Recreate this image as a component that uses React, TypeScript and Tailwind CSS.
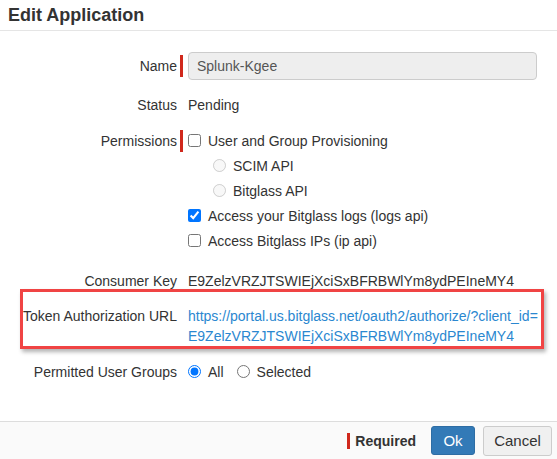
import React from "react";

const font = { fontFamily: '"Liberation Sans", Arial, sans-serif' };

function Row({
  label,
  required,
  children,
  className = "",
}: {
  label: string;
  required?: boolean;
  children: React.ReactNode;
  className?: string;
}) {
  return (
    <div className={`flex items-center ${className}`}>
      <div className="w-[177px] shrink-0 text-right">{label}</div>
      <div className="flex w-[11px] shrink-0 self-stretch items-center">
        {required && <span className="ml-[3px] h-[22px] w-[3px] bg-[#d0281c]" />}
      </div>
      <div className="flex min-w-0 flex-1 items-center">{children}</div>
    </div>
  );
}

function Check({ checked, label }: { checked?: boolean; label: string }) {
  return (
    <label className="flex h-[25px] items-center">
      <input
        type="checkbox"
        defaultChecked={checked}
        className="m-0 h-[13px] w-[13px] accent-[#0075ff]"
      />
      <span className="ml-[7px]">{label}</span>
    </label>
  );
}

function Radio({
  label,
  checked,
  disabled,
  name,
}: {
  label: string;
  checked?: boolean;
  disabled?: boolean;
  name: string;
}) {
  return (
    <label className="flex h-[25px] items-center">
      <input
        type="radio"
        name={name}
        defaultChecked={checked}
        disabled={disabled}
        className="m-0 h-[13px] w-[13px] accent-[#0075ff]"
      />
      <span className="ml-[7px]">{label}</span>
    </label>
  );
}

export default function App() {
  return (
    <div
      className="flex h-[459px] w-[557px] flex-col bg-white text-[14px] leading-[20px] text-[#333]"
      style={font}
    >
      <div className="h-[31px] border-b border-[#e5e5e5] pl-[8px] pt-[4px]">
        <h1 className="text-[18px] font-bold leading-[22px] text-[#333]">Edit Application</h1>
      </div>

      <div className="flex-1 pt-[21px]">
        <Row label="Name" required className="h-[28px]">
          <div className="flex h-[28px] w-[349px] items-center rounded-[4px] border border-[#ccc] bg-[#eee] pl-[8px] text-[#555]">
            Splunk-Kgee
          </div>
        </Row>

        <Row label="Status" className="mt-[15px]">
          Pending
        </Row>

        <Row label="Permissions" required className="mt-[13px] h-[25px]">
          <Check label="User and Group Provisioning" />
        </Row>
        <div className="ml-[213px]">
          <Radio name="prov" label="SCIM API" disabled />
          <Radio name="prov" label="Bitglass API" disabled />
        </div>
        <div className="ml-[188px]">
          <Check checked label="Access your Bitglass logs (logs api)" />
          <Check label="Access Bitglass IPs (ip api)" />
        </div>

        <Row label="Consumer Key" className="mt-[18px]">
          E9ZelzVRZJTSWIEjXciSxBFRBWlYm8ydPEIneMY4
        </Row>

        <div className="ml-[20px] mr-[13px] mt-[-2px] flex h-[60px] border-[3px] border-[#f04444] pt-[14px] shadow-[2px_3px_4px_rgba(0,0,0,0.3)]">
          <div className="flex w-[154px] shrink-0 justify-end whitespace-nowrap">
            <span>Token Authorization URL</span>
          </div>
          <div className="w-[11px] shrink-0" />
          <div className="whitespace-nowrap text-[#2a87d0]">
            <div>https://portal.us.bitglass.net/oauth2/authorize/?client_id=</div>
            <div>E9ZelzVRZJTSWIEjXciSxBFRBWlYm8ydPEIneMY4</div>
          </div>
        </div>

        <Row label="Permitted User Groups" className="mt-[10px] h-[25px]">
          <Radio name="groups" label="All" checked />
          <span className="w-[13px]" />
          <Radio name="groups" label="Selected" />
        </Row>
      </div>

      <div className="flex h-[38px] items-center justify-end border-t border-[#ddd] bg-[#fafafa] pr-[5px]">
        <span className="h-[16px] w-[3px] bg-[#d0281c]" />
        <span className="ml-[5px] font-bold">Required</span>
        <button className="ml-[15px] h-[29px] w-[44px] rounded-[3px] border border-[#2e6da4] bg-[#337ab7] text-[15px] text-white">
          Ok
        </button>
        <button className="ml-[8px] h-[30px] w-[69px] rounded-[3px] border border-[#ccc] bg-[#f0f0f0] text-[15px] text-[#333]">
          Cancel
        </button>
      </div>
    </div>
  );
}
